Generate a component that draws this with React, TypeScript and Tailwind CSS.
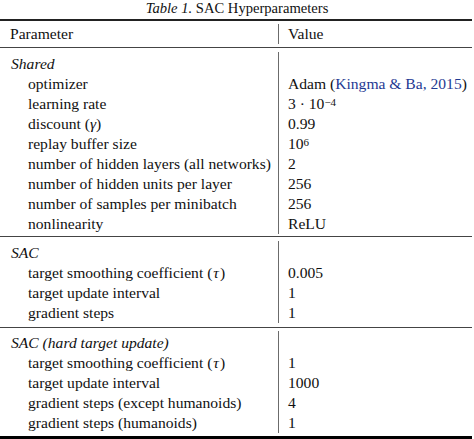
import type { ReactNode } from 'react';

type Row = { label: ReactNode; value: ReactNode };

const shared: Row[] = [
  {
    label: 'optimizer',
    value: (
      <>
        Adam (<span className="text-[#1f3a93]">Kingma &amp; Ba, 2015</span>)
      </>
    ),
  },
  {
    label: 'learning rate',
    value: (
      <>
        3 · 10<sup className="text-[11px] relative -top-[3px]">−4</sup>
      </>
    ),
  },
  { label: <>discount (<i>γ</i>)</>, value: '0.99' },
  {
    label: 'replay buffer size',
    value: (
      <>
        10<sup className="text-[11px] relative -top-[3px]">6</sup>
      </>
    ),
  },
  { label: 'number of hidden layers (all networks)', value: '2' },
  { label: 'number of hidden units per layer', value: '256' },
  { label: 'number of samples per minibatch', value: '256' },
  { label: 'nonlinearity', value: 'ReLU' },
];

const tau = (
  <>
    (<i className="px-[1px]">τ</i>)
  </>
);

const sac: Row[] = [
  { label: <>target smoothing coefficient {tau}</>, value: '0.005' },
  { label: 'target update interval', value: '1' },
  { label: 'gradient steps', value: '1' },
];

const sacHard: Row[] = [
  { label: <>target smoothing coefficient {tau}</>, value: '1' },
  { label: 'target update interval', value: '1000' },
  { label: 'gradient steps (except humanoids)', value: '4' },
  { label: 'gradient steps (humanoids)', value: '1' },
];

function Section({ title, rows, pad }: { title: string; rows: Row[]; pad: string }) {
  return (
    <div className={`flex ${pad}`}>
      <div className="w-[278px] shrink-0">
        <div className="h-[20px] leading-[20px] pl-[11px] italic">{title}</div>
        {rows.map((r, i) => (
          <div key={i} className="h-[20px] leading-[20px] pl-[28px] whitespace-nowrap">
            {r.label}
          </div>
        ))}
      </div>
      <div className="w-px bg-[#6b6b6b] -mt-[2px]" />
      <div className="pl-[9px] flex-1">
        <div className="h-[20px]" />
        {rows.map((r, i) => (
          <div key={i} className="h-[20px] leading-[20px] whitespace-nowrap">
            {r.value}
          </div>
        ))}
      </div>
    </div>
  );
}

export default function App() {
  return (
    <div className="w-[474px] h-[439px] bg-white text-[#111] text-[15.6px] overflow-hidden font-['Liberation_Serif','Times_New_Roman',serif]">
      <div className="h-[19px] leading-[17px] text-center text-[14.6px]">
        <i>Table 1.</i> SAC Hyperparameters
      </div>
      <div className="w-[472px]">
        <div className="h-[2px] bg-[#222]" />
        <div className="flex h-[26px]">
          <div className="w-[278px] shrink-0 pl-[10px] leading-[26px]">Parameter</div>
          <div className="w-px bg-[#6b6b6b] my-[3px]" />
          <div className="pl-[9px] leading-[26px]">Value</div>
        </div>
        <div className="h-px bg-[#444]" />
        <Section title="Shared" rows={shared} pad="pt-[6px] pb-[2px]" />
        <div className="h-px bg-[#444]" />
        <Section title="SAC" rows={sac} pad="pt-[6px] pb-[4px]" />
        <div className="h-px bg-[#444]" />
        <Section title="SAC (hard target update)" rows={sacHard} pad="pt-[5px] pb-[3px]" />
        <div className="h-[3px] bg-black" />
      </div>
    </div>
  );
}
